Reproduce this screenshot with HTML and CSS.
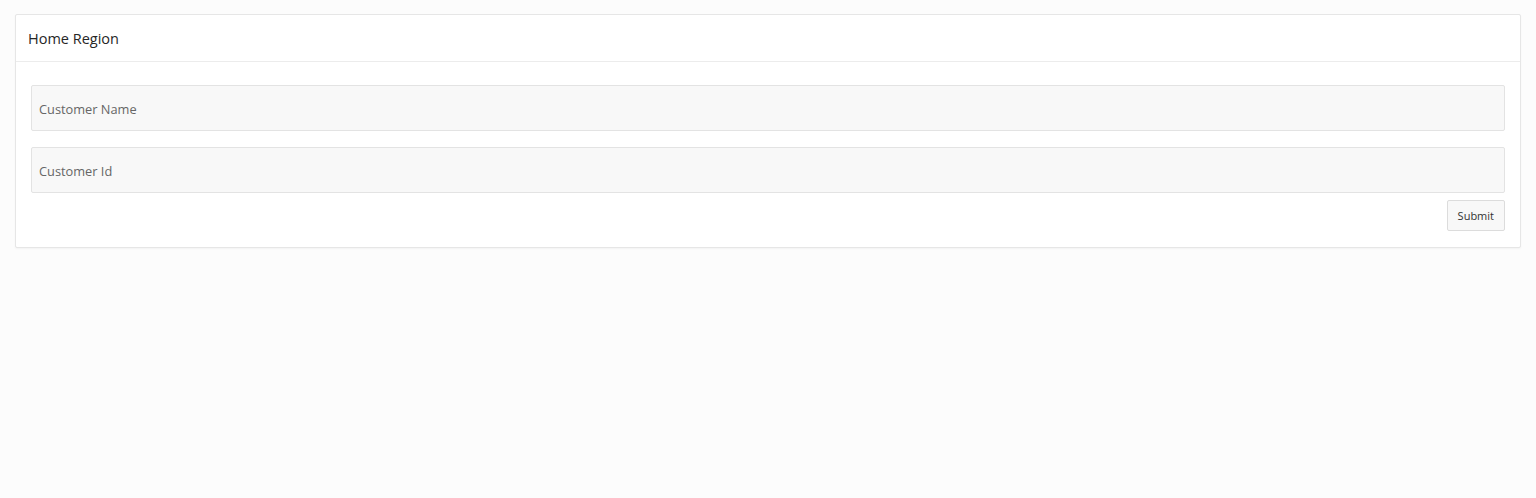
FILE: index.html
```html
<!DOCTYPE html>
<html>
<head>
<meta charset="utf-8">
<link rel="stylesheet" href="styles.css">
</head>
<body>
<div class="page">
  <section class="region">
    <header class="region-header"><h2 class="region-title">Home Region</h2></header>
    <div class="region-body">
      <div class="field"><div class="field-input">Customer Name</div></div>
      <div class="field"><div class="field-input">Customer Id</div></div>
      <div class="actions"><button class="btn">Submit</button></div>
    </div>
  </section>
</div>
</body>
</html>
```
FILE: styles.css
```css
html, body {
  margin: 0;
  padding: 0;
  background: #fcfcfc;
  font-family: "Open Sans", "Noto Sans", sans-serif;
}
.page {
  padding: 14px 15px;
  height: 470px;
}
.region {
  background: #fff;
  border: 1px solid #e6e6e6;
  border-radius: 2px;
  box-shadow: 0 1px 2px rgba(0,0,0,0.04);
}
.region-header {
  height: 46px;
  border-bottom: 1px solid #ececec;
  display: flex;
  align-items: center;
  padding: 0 12px;
}
.region-title {
  margin: 0;
  font-size: 14.5px;
  font-weight: 400;
  color: #262626;
}
.region-body {
  padding: 23px 15px 16px 15px;
  display: flex;
  flex-direction: column;
}
.field {
  margin-bottom: 16px;
}
.field + .field + .actions { margin-top: -9px; }
.field-input {
  height: 44px;
  box-sizing: border-box;
  height: 46px;
  background: #f8f8f8;
  border: 1px solid #e3e3e3;
  border-radius: 2px;
  display: flex;
  align-items: center;
  padding: 2px 7px 0 7px;
  font-size: 12.8px;
  color: #666;
}
.actions {
  display: flex;
  justify-content: flex-end;
}
.btn {
  height: 31px;
  padding: 0 10px;
  background: #f8f8f8;
  border: 1px solid #dcdcdc;
  border-radius: 2px;
  font-family: "Open Sans", "Noto Sans", sans-serif;
  font-size: 11px;
  color: #333;
}
```
